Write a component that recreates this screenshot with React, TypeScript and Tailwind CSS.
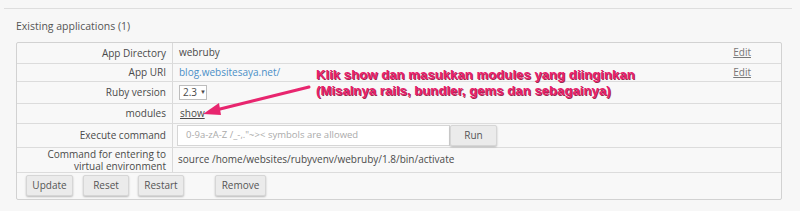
import React from 'react';

function Btn({ children, className = '' }: { children: React.ReactNode; className?: string }) {
  return (
    <button
      className={
        'h-[21px] rounded-[2px] border border-[#d6d6d6] bg-[#ebebeb] text-[10px] text-[#555] shadow-[0_1px_2px_rgba(0,0,0,0.25)] ' +
        className
      }
    >
      {children}
    </button>
  );
}

function Label({ children }: { children: React.ReactNode }) {
  return (
    <div className="flex w-[156px] shrink-0 items-center justify-end border-r border-[#d9d9d9] pr-[6px] text-right leading-[12px]">
      {children}
    </div>
  );
}

export default function App() {
  return (
    <div
      className="relative h-[211px] w-[800px] overflow-hidden bg-[#f7f7f7] text-[10px] text-[#4a4a4a]"
      style={{ fontFamily: '"Open Sans", sans-serif' }}
    >
      <div className="mx-[4px] mt-[8px] w-[788px] border-t border-[#dedede]" />
      <div className="ml-[16px] mt-[10px] text-[10.5px] text-[#555]">Existing applications (1)</div>

      <div className="ml-[16px] mt-[7px] w-[766px] rounded-[2px] border border-[#d2d2d2] bg-[#f8f8f8]">
        {/* App Directory */}
        <div className="flex h-[21px] border-b border-[#dcdcdc]">
          <Label>App Directory</Label>
          <div className="flex flex-1 items-center justify-between pl-[6px] pr-[30px]">
            <span>webruby</span>
            <span className="text-[#777] underline">Edit</span>
          </div>
        </div>
        {/* App URI */}
        <div className="flex h-[18px] border-b border-[#dcdcdc]">
          <Label>App URI</Label>
          <div className="flex flex-1 items-center justify-between pl-[6px] pr-[30px]">
            <span className="text-[#4a8fc7]">blog.websitesaya.net/</span>
            <span className="text-[#777] underline">Edit</span>
          </div>
        </div>
        {/* Ruby version */}
        <div className="flex h-[22px] border-b border-[#dcdcdc]">
          <Label>Ruby version</Label>
          <div className="flex flex-1 items-center pl-[6px]">
            <div className="flex h-[15px] w-[28px] items-center gap-[3px] border border-[#bdbdbd] bg-white pl-[3px]">
              <span>2.3</span>
              <span className="text-[6px]">▼</span>
            </div>
          </div>
        </div>
        {/* modules */}
        <div className="flex h-[20px] border-b border-[#dcdcdc]">
          <Label>modules</Label>
          <div className="flex flex-1 items-center pl-[7px]">
            <span className="underline">show</span>
          </div>
        </div>
        {/* Execute command */}
        <div className="flex h-[24px] border-b border-[#dcdcdc]">
          <Label>Execute command</Label>
          <div className="flex flex-1 items-center pl-[4px]">
            <div className="flex h-[21px] w-[273px] items-center border border-[#d6d6d6] bg-white pl-[8px] text-[9.5px] text-[#aaa]">
              0-9a-zA-Z /_-,.&quot;~&gt;&lt; symbols are allowed
            </div>
            <Btn className="w-[47px]">Run</Btn>
          </div>
        </div>
        {/* Command for entering */}
        <div className="flex h-[25px] border-b border-[#dcdcdc]">
          <Label>
            <span>
              Command for entering to
              <br />
              virtual environment
            </span>
          </Label>
          <div className="flex flex-1 items-center pl-[5px]">
            source /home/websites/rubyvenv/webruby/1.8/bin/activate
          </div>
        </div>
        {/* Buttons */}
        <div className="flex h-[26px] items-center pl-[9px]">
          <Btn className="w-[47px]">Update</Btn>
          <Btn className="ml-[10px] w-[46px]">Reset</Btn>
          <Btn className="ml-[9px] w-[46px]">Restart</Btn>
          <Btn className="ml-[31px] w-[51px]">Remove</Btn>
        </div>
      </div>

      {/* annotation */}
      <svg className="absolute left-0 top-0" width="800" height="211">
        <line x1="309" y1="87" x2="216" y2="110" stroke="#e8266f" strokeWidth="3" strokeLinecap="round" />
        <polygon points="203,114 219,103 221,115" fill="#e8266f" />
      </svg>
      <div
        className="absolute left-[316px] top-[67px] text-[13.2px] font-bold leading-[16px] text-[#e8206b] [text-shadow:1px_1px_0_#9a2a50]"
        style={{ fontFamily: '"Liberation Sans", Arial, sans-serif' }}
      >
        Klik show dan masukkan modules yang diinginkan
        <br />
        (Misalnya rails, bundler, gems dan sebagainya)
      </div>
    </div>
  );
}
